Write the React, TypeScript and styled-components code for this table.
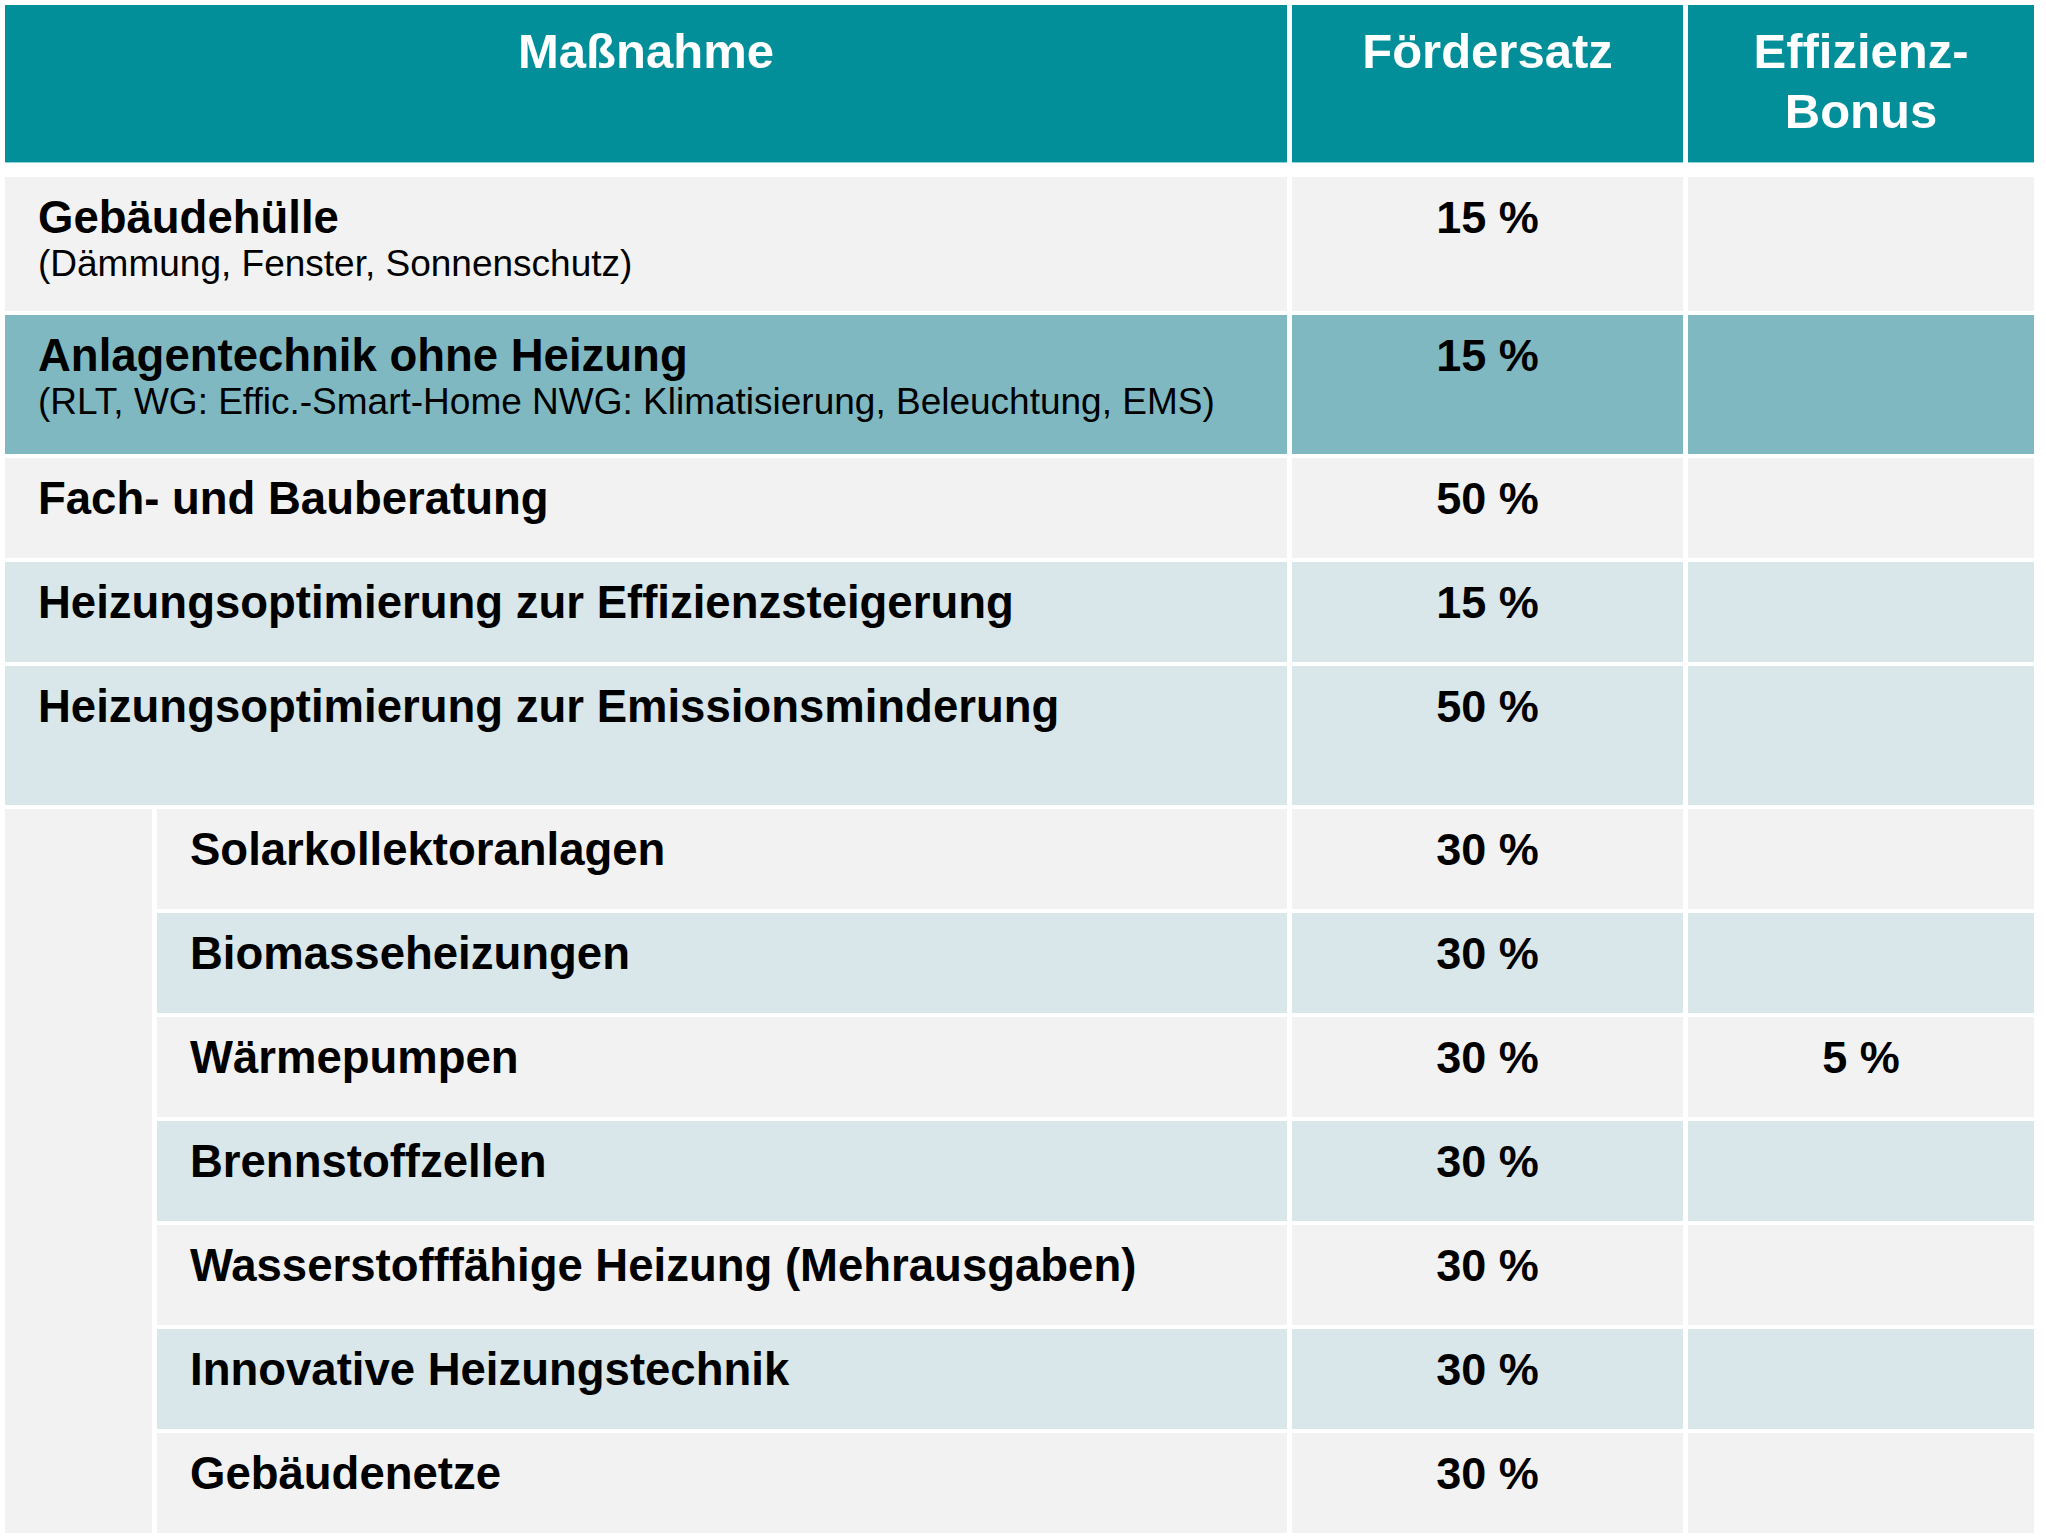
import styled, { createGlobalStyle } from "styled-components";

const GlobalStyle = createGlobalStyle`
    html, body {
        margin: 0;
        padding: 0;
        background: #ffffff;
    }
    body {
        font-family: "Liberation Sans", Arial, sans-serif;
        color: #000000;
    }
`;

type Tone = 'gray' | 'teal' | 'light';

const TONES: Record<Tone, string> = {
    gray: '#f2f2f2',
    teal: '#7fb8c0',
    light: '#d9e6ea',
};

interface MainItem {
    name: string;
    note?: string;
    rate: string;
    bonus?: string;
    tone: Tone;
    height: number;
}

interface SubItem {
    name: string;
    rate: string;
    bonus?: string;
    tone: Tone;
}

const mainItems: MainItem[] = [
    { name: 'Gebäudehülle', note: '(Dämmung, Fenster, Sonnenschutz)', rate: '15 %', tone: 'gray', height: 134 },
    { name: 'Anlagentechnik ohne Heizung', note: '(RLT, WG: Effic.-Smart-Home NWG: Klimatisierung, Beleuchtung, EMS)', rate: '15 %', tone: 'teal', height: 139 },
    { name: 'Fach- und Bauberatung', rate: '50 %', tone: 'gray', height: 100 },
    { name: 'Heizungsoptimierung zur Effizienzsteigerung', rate: '15 %', tone: 'light', height: 100 },
    { name: 'Heizungsoptimierung zur Emissionsminderung', rate: '50 %', tone: 'light', height: 139 },
];

const subItems: SubItem[] = [
    { name: 'Solarkollektoranlagen', rate: '30 %', tone: 'gray' },
    { name: 'Biomasseheizungen', rate: '30 %', tone: 'light' },
    { name: 'Wärmepumpen', rate: '30 %', bonus: '5 %', tone: 'gray' },
    { name: 'Brennstoffzellen', rate: '30 %', tone: 'light' },
    { name: 'Wasserstofffähige Heizung (Mehrausgaben)', rate: '30 %', tone: 'gray' },
    { name: 'Innovative Heizungstechnik', rate: '30 %', tone: 'light' },
    { name: 'Gebäudenetze', rate: '30 %', tone: 'gray' },
];

function App() {
    return (
        <>
            <GlobalStyle />
            <Page>
                <Table>
                    <HeaderRow>
                        <HeaderCell>Maßnahme</HeaderCell>
                        <HeaderCell>Fördersatz</HeaderCell>
                        <HeaderCell>
                            Effizienz-
                            <br />
                            Bonus
                        </HeaderCell>
                    </HeaderRow>

                    {mainItems.map((item) => (
                        <MainRow key={item.name} $height={item.height}>
                            <NameCell $tone={item.tone}>
                                <Title>{item.name}</Title>
                                {item.note && <Note>{item.note}</Note>}
                            </NameCell>
                            <ValueCell $tone={item.tone}>{item.rate}</ValueCell>
                            <ValueCell $tone={item.tone}>{item.bonus}</ValueCell>
                        </MainRow>
                    ))}

                    <SubGroup>
                        <Indent />
                        <SubList>
                            {subItems.map((item) => (
                                <SubRow key={item.name}>
                                    <NameCell $tone={item.tone}>
                                        <Title>{item.name}</Title>
                                    </NameCell>
                                    <ValueCell $tone={item.tone}>{item.rate}</ValueCell>
                                    <ValueCell $tone={item.tone}>{item.bonus}</ValueCell>
                                </SubRow>
                            ))}
                        </SubList>
                    </SubGroup>
                </Table>
            </Page>
        </>
    );
}

const Page = styled.div`
    padding: 5px;
    width: 2029px;
`;

const Table = styled.div`
    display: flex;
    flex-direction: column;
    gap: 4px;
`;

const HeaderRow = styled.div`
    display: grid;
    grid-template-columns: 1282px 391px 346px;
    column-gap: 5px;
    height: 158px;
    margin-bottom: 10px;
`;

const HeaderCell = styled.div`
    background: #028f99;
    border-bottom: 1px solid #8fd3da;
    color: #ffffff;
    font-size: 49px;
    font-weight: 700;
    line-height: 60px;
    text-align: center;
    padding-top: 16px;
    box-sizing: border-box;
`;

const MainRow = styled.div<{ $height: number }>`
    display: grid;
    grid-template-columns: 1282px 391px 346px;
    column-gap: 5px;
    height: ${(p) => p.$height}px;
`;

const SubGroup = styled.div`
    display: grid;
    grid-template-columns: 147px 1fr;
    column-gap: 5px;
`;

const Indent = styled.div`
    background: #f2f2f2;
`;

const SubList = styled.div`
    display: flex;
    flex-direction: column;
    gap: 4px;
`;

const SubRow = styled.div`
    display: grid;
    grid-template-columns: 1130px 391px 346px;
    column-gap: 5px;
    height: 100px;
`;

const NameCell = styled.div<{ $tone: Tone }>`
    background: ${(p) => TONES[p.$tone]};
    padding: 15px 33px 0;
    box-sizing: border-box;
`;

const ValueCell = styled.div<{ $tone: Tone }>`
    background: ${(p) => TONES[p.$tone]};
    padding-top: 15px;
    font-size: 45px;
    font-weight: 700;
    line-height: 1.15;
    text-align: center;
    box-sizing: border-box;
`;

const Title = styled.div`
    font-size: 45.5px;
    font-weight: 700;
    line-height: 1.15;
`;

const Note = styled.div`
    font-size: 37px;
    font-weight: 400;
    line-height: 1.1;
`;

export default App;
